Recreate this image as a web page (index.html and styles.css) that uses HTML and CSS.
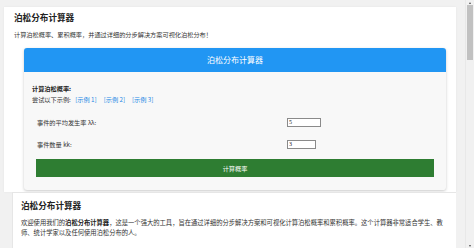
FILE: index.html
```html
<!DOCTYPE html>
<html lang="zh-CN">
<head>
<meta charset="utf-8">
<title>泊松分布计算器</title>
<link rel="stylesheet" href="styles.css">
</head>
<body>
<div class="page">
  <section class="panel intro">
    <h1 class="title">泊松分布计算器</h1>
    <p class="desc">计算泊松概率、累积概率，并通过详细的分步解决方案可视化泊松分布！</p>
    <div class="card">
      <div class="card-head">泊松分布计算器</div>
      <div class="card-body">
        <div class="strong-line">计算泊松概率:</div>
        <div class="examples">尝试以下示例: <a href="#" class="ex">[示例 1]</a><a href="#" class="ex">[示例 2]</a><a href="#" class="ex">[示例 3]</a></div>
        <form class="form">
          <div class="row">
            <label class="lbl" for="lam">事件的平均发生率 λλ:</label>
            <input class="inp inp-wide" id="lam" type="text" value="5">
          </div>
          <div class="row">
            <label class="lbl" for="k">事件数量 kk:</label>
            <input class="inp" id="k" type="text" value="3">
          </div>
          <button type="button" class="btn">计算概率</button>
        </form>
      </div>
    </div>
  </section>
  <section class="panel article">
    <h2 class="subtitle">泊松分布计算器</h2>
    <p class="text">欢迎使用我们的<strong>泊松分布计算器</strong>，这是一个强大的工具，旨在通过详细的分步解决方案和可视化计算泊松概率和累积概率。这个计算器非常适合学生、教师、统计学家以及任何使用泊松分布的人。</p>
    <h3 class="minor">什么是泊松分布？</h3>
    <p class="text">泊松分布是一种离散概率分布，用于描述在固定时间或空间间隔内发生的事件数量，前提是这些事件以已知的恒定平均速率独立发生。</p>
    <h3 class="minor">泊松概率公式</h3>
    <p class="text">P(X = k) = (λ^k · e^(-λ)) / k!，其中 λ 是事件的平均发生率，k 是事件发生的次数，e 是自然对数的底数。</p>
    <h3 class="minor">如何使用该计算器</h3>
    <p class="text">输入事件的平均发生率 λ 和事件数量 k，然后点击“计算概率”按钮。计算器将显示概率、累积概率以及详细的分步解决方案。</p>
    <h3 class="minor">泊松分布的应用</h3>
    <p class="text">泊松分布广泛应用于排队论、电信、保险、生物学和质量控制等领域，例如估计每小时到达的顾客数量或每页的印刷错误数量。</p>
  </section>
</div>
<div class="sbar" aria-hidden="true">
  <span class="sbar-arrow sbar-up"></span>
  <span class="sbar-thumb"></span>
  <span class="sbar-fill"></span>
  <span class="sbar-arrow sbar-down"></span>
</div>
</body>
</html>
```

FILE: styles.css
```css
html, body {
  margin: 0;
  padding: 0;
}
html::-webkit-scrollbar {
  display: none;
}
html {
  scrollbar-width: none;
}
body {
  background: #f1f1f1;
  font-family: "Noto Sans CJK SC", "Noto Sans", "Liberation Sans", sans-serif;
  color: #333;
}
.page {
  width: 452px;
  margin-left: 4px;
  padding-top: 7px;
}
.panel {
  background: #fff;
}
.intro {
  padding: 4px 10px 2px 10px;
  box-shadow: 0 0 2px rgba(0, 0, 0, 0.06);
}
.title {
  margin: 0;
  font-size: 8.6px;
  line-height: 12px;
  font-weight: 700;
  color: #222;
}
.desc {
  margin: 7px 0 0 0;
  font-size: 6.2px;
  line-height: 9px;
  color: #333;
}
.card {
  margin: 8.5px 0 0 10px;
  background: #f8f8f8;
  border-radius: 3px;
  box-shadow: 0 1px 3px rgba(0, 0, 0, 0.22);
}
.card-head {
  height: 24px;
  line-height: 24px;
  background: #2196f3;
  color: #fff;
  text-align: center;
  font-size: 8px;
  border-radius: 3px 3px 0 0;
}
.card-body {
  padding: 11.5px 8px 13px 8px;
  font-size: 6.2px;
  line-height: 11px;
}
.strong-line {
  font-weight: 700;
  color: #222;
}
.examples {
  color: #333;
}
.ex {
  color: #1e88e5;
  text-decoration: none;
  margin-right: 7px;
}
.ex:first-child {
  margin-left: 3px;
}
.form {
  margin: 6px 4px 0 4px;
}
.row {
  display: flex;
  align-items: center;
  height: 22px;
}
.lbl {
  width: 251px;
  padding-left: 1px;
  box-sizing: border-box;
}
.inp {
  width: 29px;
  height: 9px;
  box-sizing: border-box;
  padding: 0 1px;
  border: 0.6px solid #8a8a8a;
  font-family: "Liberation Serif", serif;
  font-size: 6px;
  background: #fff;
  color: #222;
}
.inp-wide {
  width: 34px;
}
.btn {
  display: block;
  width: 100%;
  height: 18px;
  margin-top: 4px;
  border: none;
  background: #2e7d32;
  color: #fff;
  font-family: "Noto Sans CJK SC", "Noto Sans", sans-serif;
  font-size: 6.2px;
  padding: 0;
}
.article {
  margin-left: 8px;
  border-top: 1px solid #e6e6e6;
  border-left: 1px solid #e6e6e6;
  padding: 5px 9px 20px 8px;
  min-height: 760px;
}
.subtitle {
  margin: 0;
  font-size: 8.6px;
  line-height: 14px;
  font-weight: 700;
  color: #222;
}
.text {
  margin: 6px 0 0 0;
  font-size: 6.3px;
  line-height: 9.5px;
  color: #333;
}
.text strong {
  color: #222;
}
.minor {
  margin: 18px 0 0 0;
  font-size: 7.5px;
  line-height: 11px;
  color: #222;
}
/* simulated window scrollbar, overlaying the right edge */
.sbar {
  position: fixed;
  top: 0;
  right: 0;
  bottom: 0;
  width: 8px;
  background: #f1f1f1;
  border-left: 1px solid #e8e8e8;
  display: flex;
  flex-direction: column;
  align-items: center;
}
.sbar-arrow {
  height: 5px;
  width: 100%;
  display: flex;
  justify-content: center;
  align-items: center;
}
.sbar-up::before,
.sbar-down::before {
  content: "";
  width: 0;
  height: 0;
  border-left: 1.5px solid transparent;
  border-right: 1.5px solid transparent;
}
.sbar-up::before {
  border-bottom: 2px solid #505050;
}
.sbar-down::before {
  border-top: 2px solid #505050;
}
.sbar-thumb {
  width: 6px;
  height: 55px;
  background: #c1c1c1;
}
.sbar-fill {
  flex: 1;
}
```
